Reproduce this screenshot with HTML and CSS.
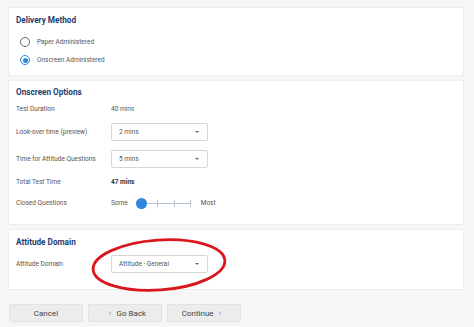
FILE: index.html
```html
<!DOCTYPE html>
<html lang="en">
<head>
    <meta charset="UTF-8" />
    <meta name="viewport" content="width=device-width, initial-scale=1" />
    <title>Test Setup</title>
    <link rel="stylesheet" href="styles.css">
</head>
<body>
    <div class="page">
        <section class="card delivery">
            <h2>Delivery Method</h2>
            <label class="radio_row">
                <span class="radio"></span>Paper Administered
            </label>
            <label class="radio_row">
                <span class="radio checked"></span>Onscreen Administered
            </label>
        </section>

        <section class="card options">
            <h2>Onscreen Options</h2>
            <div class="row text_row">
                <div class="label">Test Duration</div>
                <div class="value">40 mins</div>
            </div>
            <div class="row select_row">
                <div class="label">Look-over time (preview)</div>
                <div class="select">2 mins<span class="caret"></span></div>
            </div>
            <div class="row select_row">
                <div class="label">Time for Attitude Questions</div>
                <div class="select">5 mins<span class="caret"></span></div>
            </div>
            <div class="row text_row">
                <div class="label">Total Test Time</div>
                <div class="value bold">47 mins</div>
            </div>
            <div class="row slider_row">
                <div class="label">Closed Questions</div>
                <div class="slider">
                    <span class="end">Some</span>
                    <div class="track">
                        <span class="thumb"></span>
                        <span class="tick t1"></span>
                        <span class="tick t2"></span>
                        <span class="tick t3"></span>
                    </div>
                    <span class="end">Most</span>
                </div>
            </div>
        </section>

        <section class="card domain">
            <h2>Attitude Domain</h2>
            <div class="row select_row">
                <div class="label">Attitude Domain</div>
                <div class="select">Attitude - General<span class="caret"></span></div>
            </div>
            <svg class="circled" width="146" height="60" viewBox="0 0 146 60">
                <ellipse cx="73" cy="30" rx="66" ry="25" fill="none" stroke="#d8161c" stroke-width="2.8" transform="rotate(-4 73 30)"/>
            </svg>
        </section>

        <div class="buttons">
            <button class="btn">Cancel</button>
            <button class="btn"><span class="chev">&lsaquo;</span>Go Back</button>
            <button class="btn">Continue<span class="chev">&rsaquo;</span></button>
        </div>
    </div>
</body>
</html>
```

FILE: styles.css
```css
body, html {
    margin: 0;
    padding: 0;
    font-family: Roboto, "Liberation Sans", sans-serif;
    background-color: #f6f6f6;
    color: #555;
}
.page {
    padding: 7px 10px 0 8px;
    display: flex;
    flex-direction: column;
    gap: 4px;
}
.card {
    background: white;
    border: 1px solid #eeeeee;
    box-sizing: border-box;
    width: 456px;
    padding: 0 7px;
    display: flex;
    flex-direction: column;
    position: relative;
}
.card h2 {
    margin: 0;
    font-size: 8.2px;
    line-height: 12px;
    font-weight: 700;
    color: #1d3d72;
}
.delivery {
    height: 69px;
    padding-top: 6px;
}
.delivery h2 {
    margin-bottom: 7px;
}
.radio_row {
    display: flex;
    align-items: center;
    height: 18px;
    font-size: 6.5px;
    padding-left: 4px;
}
.radio {
    width: 8px;
    height: 8px;
    border: 1px solid #666;
    border-radius: 50%;
    margin-right: 7px;
    display: flex;
    align-items: center;
    justify-content: center;
}
.radio.checked {
    border-color: #2e86de;
}
.radio.checked::after {
    content: "";
    width: 5px;
    height: 5px;
    border-radius: 50%;
    background: #2e86de;
}
.options {
    height: 145px;
    padding-top: 5px;
    gap: 5px;
}
.options h2 {
    margin-bottom: -1px;
}
.row {
    display: grid;
    grid-template-columns: 95px 1fr;
    align-items: center;
    font-size: 6.5px;
}
.text_row {
    height: 14px;
}
.select_row {
    height: 22px;
}
.slider_row {
    height: 18px;
}
.bold {
    font-weight: 700;
    color: #333;
}
.select {
    width: 97px;
    height: 18px;
    box-sizing: border-box;
    border: 1px solid #d6d6d6;
    border-radius: 2px;
    display: flex;
    align-items: center;
    justify-content: space-between;
    padding: 0 8px 0 7px;
    color: #555;
}
.caret {
    width: 0;
    height: 0;
    border-left: 2px solid transparent;
    border-right: 2px solid transparent;
    border-top: 2px solid #666;
}
.slider {
    display: flex;
    align-items: center;
}
.track {
    position: relative;
    width: 50px;
    height: 1px;
    background: #b9c3cb;
    margin: 0 10px 0 13px;
}
.thumb {
    position: absolute;
    left: -5px;
    top: -5px;
    width: 11px;
    height: 11px;
    border-radius: 50%;
    background: #2e86de;
}
.tick {
    position: absolute;
    top: -3px;
    width: 1px;
    height: 7px;
    background: #b9c3cb;
}
.t1 { left: 16px; }
.t2 { left: 33px; }
.t3 { left: 49px; }
.domain {
    height: 61px;
    padding-top: 6px;
}
.domain h2 {
    margin-bottom: 5px;
}
.circled {
    position: absolute;
    left: 77px;
    top: 5px;
}
.buttons {
    display: flex;
    gap: 5px;
    margin-top: 10px;
    padding-left: 1px;
}
.btn {
    width: 74px;
    height: 18px;
    background: #ececec;
    border: 1px solid #e2e2e2;
    border-radius: 2px;
    font-family: inherit;
    font-size: 8px;
    color: #444;
    padding: 0;
    display: flex;
    align-items: center;
    justify-content: center;
}
.chev {
    color: #999;
    font-size: 9px;
    margin: 0 5px;
}
```
